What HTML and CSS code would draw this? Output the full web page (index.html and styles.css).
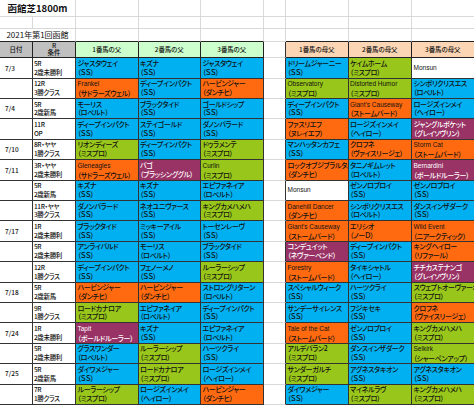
FILE: index.html
```html
<!DOCTYPE html>
<html lang="ja">
<head>
<meta charset="utf-8">
<title>函館芝1800m</title>
<link rel="stylesheet" href="styles.css">
</head>
<body>
<div class="sheet">
  <div class="c title">函館芝1800m</div>
  <div class="c"></div><div class="c"></div><div class="c"></div><div class="c"></div><div class="c"></div><div class="c"></div><div class="c"></div>

  <div class="c"></div><div class="c"></div><div class="c"></div><div class="c"></div><div class="c"></div><div class="c"></div><div class="c"></div><div class="c"></div><div class="c"></div>

  <div class="c sub hb">2021年第1回函館</div>
  <div class="c hb"></div><div class="c hb"></div><div class="c hb"></div><div class="c"></div><div class="c hb"></div><div class="c hb"></div><div class="c hb"></div>

  <div class="h hg">日付</div>
  <div class="h hg">R<br>条件</div>
  <div class="h hf">1番馬の父</div>
  <div class="h hf">2番馬の父</div>
  <div class="h hf">3番馬の父</div>
  <div class="gp"></div>
  <div class="h hm">1番馬の母父</div>
  <div class="h hm">2番馬の母父</div>
  <div class="h hm">3番馬の母父</div>

  <!-- 1 -->
  <div class="d dt">7/3</div><div class="d cd">5R<br>2歳未勝利</div>
  <div class="d b">ジャスタウェイ<br>（ＳＳ）</div><div class="d b">キズナ<br>（ＳＳ）</div><div class="d b">ジャスタウェイ<br>（ＳＳ）</div>
  <div class="gp"></div>
  <div class="d b">ドリームジャーニー<br>（ＳＳ）</div><div class="d g">ケイムホーム<br>（ミスプロ）</div><div class="d w"><span class="en">Monsun</span></div>
  <!-- 2 -->
  <div class="d dt"></div><div class="d cd">12R<br>3勝クラス</div>
  <div class="d o"><span class="en">Frankel</span><br>（サドラーズウェル）</div><div class="d b">ディープインパクト<br>（ＳＳ）</div><div class="d o">ハービンジャー<br>（ダンチヒ）</div>
  <div class="gp"></div>
  <div class="d g"><span class="en">Observatory</span><br>（ミスプロ）</div><div class="d g"><span class="en">Distorted Humor</span><br>（ミスプロ）</div><div class="d b">シンボリクリスエス<br>（ロベルト）</div>
  <!-- 3 -->
  <div class="d dt">7/4</div><div class="d cd">5R<br>2歳新馬</div>
  <div class="d b">モーリス<br>（ロベルト）</div><div class="d b">ブラックタイド<br>（ＳＳ）</div><div class="d b">ゴールドシップ<br>（ＳＳ）</div>
  <div class="gp"></div>
  <div class="d b">ディープインパクト<br>（ＳＳ）</div><div class="d o"><span class="en">Giant's Causeway</span><br>（ストームバード）</div><div class="d b">ロージズインメイ<br>（ヘイロー）</div>
  <!-- 4 -->
  <div class="d dt"></div><div class="d cd">11R<br>OP</div>
  <div class="d b">ディープインパクト<br>（ＳＳ）</div><div class="d b">ステイゴールド<br>（ＳＳ）</div><div class="d b">ダノンバラード<br>（ＳＳ）</div>
  <div class="gp"></div>
  <div class="d o">ファスリエフ<br>（ヌレイエフ）</div><div class="d b">ロージズインメイ<br>（ヘイロー）</div><div class="d p">ジャングルポケット<br>（グレイソヴリン）</div>
  <!-- 5 -->
  <div class="d dt">7/10</div><div class="d cd">8R・ヤヤ<br>1勝クラス</div>
  <div class="d g">リオンディーズ<br>（ミスプロ）</div><div class="d b">ディープインパクト<br>（ＳＳ）</div><div class="d g">ドゥラメンテ<br>（ミスプロ）</div>
  <div class="gp"></div>
  <div class="d b">マンハッタンカフェ<br>（ＳＳ）</div><div class="d o">クロフネ<br>（ヴァイスリージェ）</div><div class="d o"><span class="en">Storm Cat</span><br>（ストームバード）</div>
  <!-- 6 -->
  <div class="d dt">7/11</div><div class="d cd">3R・ヤヤ<br>2歳未勝利</div>
  <div class="d o"><span class="en">Gleneagles</span><br>（サドラーズウェル）</div><div class="d p">バゴ<br>（ブラッシンググル）</div><div class="d g"><span class="en">Curlin</span><br>（ミスプロ）</div>
  <div class="gp"></div>
  <div class="d o">ロックオブジブラルタル<br>（ダンチヒ）</div><div class="d b">タニノギムレット<br>（ロベルト）</div><div class="d p"><span class="en">Bernardini</span><br>（ボールドルーラー）</div>
  <!-- 7 -->
  <div class="d dt"></div><div class="d cd">5R<br>2歳新馬</div>
  <div class="d b">キズナ<br>（ＳＳ）</div><div class="d b">キズナ<br>（ＳＳ）</div><div class="d b">エピファネイア<br>（ロベルト）</div>
  <div class="gp"></div>
  <div class="d w"><span class="en">Monsun</span></div><div class="d b">ゼンノロブロイ<br>（ＳＳ）</div><div class="d b">ゼンノロブロイ<br>（ＳＳ）</div>
  <!-- 8 -->
  <div class="d dt"></div><div class="d cd">11R・ヤヤ<br>3勝クラス</div>
  <div class="d b">ダノンバラード<br>（ＳＳ）</div><div class="d b">ネオユニヴァース<br>（ＳＳ）</div><div class="d g">キングカメハメハ<br>（ミスプロ）</div>
  <div class="gp"></div>
  <div class="d o"><span class="en">Danehill Dancer</span><br>（ダンチヒ）</div><div class="d b">シンボリクリスエス<br>（ロベルト）</div><div class="d b">ダンスインザダーク<br>（ＳＳ）</div>
  <!-- 9 -->
  <div class="d dt">7/17</div><div class="d cd">1R<br>2歳未勝利</div>
  <div class="d b">ブラックタイド<br>（ＳＳ）</div><div class="d b">ミッキーアイル<br>（ＳＳ）</div><div class="d b">トーセンレーヴ<br>（ＳＳ）</div>
  <div class="gp"></div>
  <div class="d o"><span class="en">Giant's Causeway</span><br>（ストームバード）</div><div class="d o">エリシオ<br>（ノーＤ）</div><div class="d o"><span class="en">Wild Event</span><br>（ニアークティック）</div>
  <!-- 10 -->
  <div class="d dt"></div><div class="d cd">5R<br>2歳未勝利</div>
  <div class="d b">アンライバルド<br>（ＳＳ）</div><div class="d b">モーリス<br>（ロベルト）</div><div class="d b">ブラックタイド<br>（ＳＳ）</div>
  <div class="gp"></div>
  <div class="d p">コンデュイット<br>（ネヴァーベンド）</div><div class="d b">ディープインパクト<br>（ＳＳ）</div><div class="d o">キングヘイロー<br>（リファール）</div>
  <!-- 11 -->
  <div class="d dt"></div><div class="d cd">12R<br>1勝クラス</div>
  <div class="d b">ディープインパクト<br>（ＳＳ）</div><div class="d b">フェノーメノ<br>（ＳＳ）</div><div class="d g">ルーラーシップ<br>（ミスプロ）</div>
  <div class="gp"></div>
  <div class="d o"><span class="en">Forestry</span><br>（ストームバード）</div><div class="d b">タイキシャトル<br>（ヘイロー）</div><div class="d p">チチカステナンゴ<br>（グレイソヴリン）</div>
  <!-- 12 -->
  <div class="d dt">7/18</div><div class="d cd">5R<br>2歳新馬</div>
  <div class="d o">ハービンジャー<br>（ダンチヒ）</div><div class="d o">ハービンジャー<br>（ダンチヒ）</div><div class="d b">ストロングリターン<br>（ロベルト）</div>
  <div class="gp"></div>
  <div class="d b">スペシャルウィーク<br>（ＳＳ）</div><div class="d b">ハーツクライ<br>（ＳＳ）</div><div class="d g">スウェプトオーヴァーボード<br>（ミスプロ）</div>
  <!-- 13 -->
  <div class="d dt"></div><div class="d cd">9R<br>1勝クラス</div>
  <div class="d g">ロードカナロア<br>（ミスプロ）</div><div class="d b">エピファネイア<br>（ロベルト）</div><div class="d b">ディープインパクト<br>（ＳＳ）</div>
  <div class="gp"></div>
  <div class="d b">サンデーサイレンス<br>（ＳＳ）</div><div class="d b">フジキセキ<br>（ＳＳ）</div><div class="d o">クロフネ<br>（ヴァイスリージェ）</div>
  <!-- 14 -->
  <div class="d dt">7/24</div><div class="d cd">1R<br>2歳未勝利</div>
  <div class="d p"><span class="en">Tapit</span><br>（ボールドルーラー）</div><div class="d b">キズナ<br>（ＳＳ）</div><div class="d b">エピファネイア<br>（ロベルト）</div>
  <div class="gp"></div>
  <div class="d o"><span class="en">Tale of the Cat</span><br>（ストームバード）</div><div class="d b">ゼンノロブロイ<br>（ＳＳ）</div><div class="d g">キングカメハメハ<br>（ミスプロ）</div>
  <!-- 15 -->
  <div class="d dt"></div><div class="d cd">5R<br>2歳未勝利</div>
  <div class="d b">グラスワンダー<br>（ロベルト）</div><div class="d g">ルーラーシップ<br>（ミスプロ）</div><div class="d b">ハーツクライ<br>（ＳＳ）</div>
  <div class="gp"></div>
  <div class="d g">アルデバラン2<br>（ミスプロ）</div><div class="d b">ダンスインザダーク<br>（ＳＳ）</div><div class="d g"><span class="en">Selkirk</span><br>（シャーペンアップ）</div>
  <!-- 16 -->
  <div class="d dt">7/25</div><div class="d cd">5R<br>2歳新馬</div>
  <div class="d b">ダイワメジャー<br>（ＳＳ）</div><div class="d g">ロードカナロア<br>（ミスプロ）</div><div class="d b">ロージズインメイ<br>（ヘイロー）</div>
  <div class="gp"></div>
  <div class="d g">サンダーガルチ<br>（ミスプロ）</div><div class="d b">アグネスタキオン<br>（ＳＳ）</div><div class="d b">アグネスタキオン<br>（ＳＳ）</div>
  <!-- 17 -->
  <div class="d dt"></div><div class="d cd">7R<br>1勝クラス</div>
  <div class="d g">ルーラーシップ<br>（ミスプロ）</div><div class="d b">ロージズインメイ<br>（ヘイロー）</div><div class="d o">ハービンジャー<br>（ダンチヒ）</div>
  <div class="gp"></div>
  <div class="d b">ダイワメジャー<br>（ＳＳ）</div><div class="d g">マイネルラヴ<br>（ミスプロ）</div><div class="d g">キングカメハメハ<br>（ミスプロ）</div>
</div>
</body>
</html>
```

FILE: styles.css
```css
* { box-sizing: border-box; }
html, body { margin: 0; padding: 0; background: #fff; overflow: hidden; }
body {
  font-family: "Noto Sans CJK JP", "Noto Sans", sans-serif;
  font-feature-settings: "palt" 1;
  color: #111;
}
.sheet {
  display: grid;
  grid-template-columns: 33px 43px 62.5px 62.5px 62.5px 22.5px 62.5px 63.5px 62.5px;
  grid-template-rows: 16.5px 12px 13.2px 16.6px repeat(17, 20.4px);
  width: 474.5px;
}
.c {
  border-right: 1px solid #d9d9d9;
  border-bottom: 1px solid #d9d9d9;
}
.title {
  grid-column: span 2;
  font-weight: 700;
  font-size: 9.5px;
  line-height: 16px;
  text-align: center;
  white-space: nowrap;
}
.sub {
  grid-column: span 2;
  font-size: 8px;
  line-height: 12px;
  text-align: center;
  white-space: nowrap;
}
.hb { border-bottom-color: #222; }

.h {
  border-right: 1px solid #222;
  border-bottom: 1px solid #222;
  font-size: 6.4px;
  line-height: 7.5px;
  font-weight: 500;
  display: flex;
  align-items: center;
  justify-content: center;
  text-align: center;
  white-space: nowrap;
}
.hg { background: #c0c0c0; }
.hf { background: #ccffcc; }
.hm { background: #fcd5b4; }

.gp {
  border-right: 1px solid #333;
  border-bottom: 1px solid #d9d9d9;
}

.d {
  border-right: 1px solid #333;
  border-bottom: 1px solid #333;
  font-size: 7px;
  font-weight: 500;
  line-height: 8.8px;
  letter-spacing: -0.35px;
  padding: 0.6px 0 0 1.5px;
  white-space: nowrap;
  overflow: hidden;
}
.en {
  font-family: "Liberation Sans", Arial, sans-serif;
  font-size: 6.5px;
  font-weight: 400;
  letter-spacing: 0;
}
.dt {
  display: flex;
  align-items: center;
  padding: 0 0 0 5px;
  font-size: 6.5px;
  letter-spacing: 0;
}
.cd { font-size: 6.5px; padding-left: 1px; }

.b { background: #00b0f0; }
.g { background: #99c61a; }
.o { background: #ff6a10; }
.p { background: #993366; color: #fff; }
.w {
  background: #fff;
  display: flex;
  align-items: center;
}
```
